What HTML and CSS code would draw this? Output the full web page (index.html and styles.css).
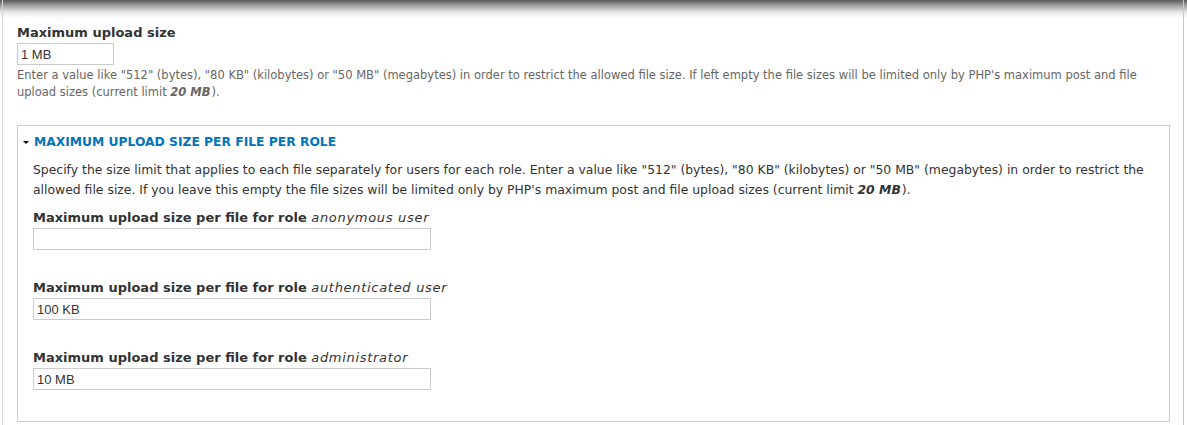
FILE: index.html
```html
<!DOCTYPE html>
<html lang="en">
<head>
    <meta charset="UTF-8">
    <title>Upload size settings</title>
    <link rel="stylesheet" href="styles.css">
</head>
<body>

    <div class="frame">
        <div class="form-item">
            <label for="edit-max-size">Maximum upload size</label>
            <input type="text" id="edit-max-size" class="form-text small" value="1 MB">
            <div class="description">Enter a value like "512" (bytes), "80 KB" (kilobytes) or "50 MB" (megabytes) in order to restrict the allowed file size. If left empty the file sizes will be limited only by PHP's maximum post and file upload sizes (current limit <em class="placeholder">20 MB</em>).</div>
        </div>

        <div class="fieldset">
            <div class="legend">
                <svg class="arrow" width="6" height="3" viewBox="0 0 6 3"><polygon points="0,0 6,0 3,3" fill="#000"/></svg>
                <a href="#">Maximum upload size per file per role</a>
            </div>
            <div class="fieldset-wrapper">
                <div class="fieldset-description">Specify the size limit that applies to each file separately for users for each role. Enter a value like "512" (bytes), "80 KB" (kilobytes) or "50 MB" (megabytes) in order to restrict the allowed file size. If you leave this empty the file sizes will be limited only by PHP's maximum post and file upload sizes (current limit <em class="placeholder">20 MB</em>).</div>

                <div class="form-item role">
                    <label for="edit-role-1">Maximum upload size per file for role <em>anonymous user</em></label>
                    <input type="text" id="edit-role-1" class="form-text" value="">
                </div>
                <div class="form-item role">
                    <label for="edit-role-2">Maximum upload size per file for role <em>authenticated user</em></label>
                    <input type="text" id="edit-role-2" class="form-text" value="100 KB">
                </div>
                <div class="form-item role">
                    <label for="edit-role-3">Maximum upload size per file for role <em>administrator</em></label>
                    <input type="text" id="edit-role-3" class="form-text" value="10 MB">
                </div>
            </div>
        </div>
    </div>

</body>
</html>
```

FILE: styles.css
```css
html, body {
    margin: 0;
    height: 100%;
}
body {
    font-family: "DejaVu Sans", Verdana, sans-serif;
    color: #333;
    background: linear-gradient(#5a5a5a, #9a9a9a 5px, #e6e6e6 12px, #fff 18px) no-repeat;
}
.frame {
    margin: 0 3px 0 2px;
    border-left: 1px solid #d4d4d4;
    border-right: 1px solid #c8c8c8;
    padding: 25px 13px 0 14px;
    min-height: 100%;
    box-sizing: border-box;
}
label {
    display: block;
    font-size: 13px;
    font-weight: bold;
    line-height: 16px;
    margin-bottom: 2px;
}
label em {
    font-weight: normal;
    font-style: italic;
    letter-spacing: 0.7px;
}
.form-text {
    display: block;
    box-sizing: border-box;
    width: 398px;
    height: 22px;
    padding: 0 3px;
    margin: 0;
    border: 1px solid #ccc;
    font-family: "Liberation Sans", Arial, sans-serif;
    font-size: 13px;
    color: #333;
    background: #fff;
}
.form-text.small {
    width: 97px;
}
.description {
    margin-top: 2px;
    font-size: 11.5px;
    line-height: 17px;
    color: #666;
}
.placeholder {
    font-weight: bold;
    font-style: italic;
    padding-right: 1px;
}
.fieldset {
    margin-top: 24px;
    border: 1px solid #ccc;
    padding: 8px 15px 31px 5px;
}
.legend {
    display: flex;
    align-items: center;
    gap: 5px;
    line-height: 16px;
    margin-bottom: 10px;
}
.legend a {
    color: #0074bd;
    text-decoration: none;
    font-weight: bold;
    font-size: 12.3px;
    text-transform: uppercase;
}
.fieldset-wrapper {
    padding-left: 10px;
}
.fieldset-description {
    font-size: 12.4px;
    line-height: 20px;
    margin-bottom: 10px;
}
.form-item.role {
    margin-bottom: 30px;
}
.form-item.role:last-child {
    margin-bottom: 0;
}
```
